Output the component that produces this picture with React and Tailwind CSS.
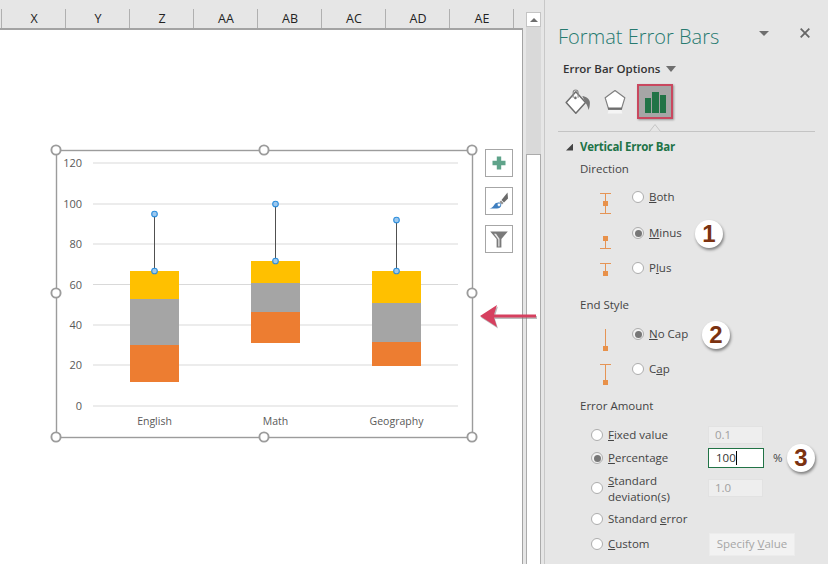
const columns = ['X', 'Y', 'Z', 'AA', 'AB', 'AC', 'AD', 'AE']

const gridLines = [
  { y: 163, label: '120' },
  { y: 204, label: '100' },
  { y: 244, label: '80' },
  { y: 284.5, label: '60' },
  { y: 325, label: '40' },
  { y: 365, label: '20' },
  { y: 406, label: '0' },
]

const bars = [
  { name: 'English', x: 130, top: 271, a: 299, b: 345, c: 382, err: 214 },
  { name: 'Math', x: 251, top: 261, a: 283, b: 312, c: 343, err: 204 },
  { name: 'Geography', x: 372, top: 271, a: 303, b: 342, c: 366, err: 220 },
]

const handles = [
  [56, 150], [264, 150], [472, 150],
  [56, 293], [472, 293],
  [56, 437], [264, 437], [472, 437],
]

function Chart() {
  return (
    <svg viewBox="50 144 430 300" className="block w-[430px] h-[300px] ml-[50px] mt-[114px]">
      <rect x="56.5" y="150.5" width="416" height="287" fill="#fff" stroke="#9c9c9c" strokeWidth="1.4" />
      {gridLines.map((g) => (
        <g key={g.label}>
          <line x1="93" x2="458" y1={g.y} y2={g.y} stroke="#d9d9d9" strokeWidth="1" />
          <text x="82" y={g.y + 4} textAnchor="end" fontSize="11" fill="#595959" fontFamily="'Open Sans', sans-serif">{g.label}</text>
        </g>
      ))}
      {bars.map((b) => {
        const cx = b.x + 24.5
        return (
          <g key={b.name}>
            <rect x={b.x} y={b.top} width="49" height={b.a - b.top} fill="#ffc000" />
            <rect x={b.x} y={b.a} width="49" height={b.b - b.a} fill="#a5a5a5" />
            <rect x={b.x} y={b.b} width="49" height={b.c - b.b} fill="#ed7d31" />
            <line x1={cx} x2={cx} y1={b.err} y2={b.top} stroke="#505050" strokeWidth="1" />
            <circle cx={cx} cy={b.err} r="2.8" fill="#9dc8ee" stroke="#2e8fdc" strokeWidth="1.1" />
            <circle cx={cx} cy={b.top} r="2.8" fill="#9dc8ee" stroke="#2e8fdc" strokeWidth="1.1" />
            <text x={cx} y="425" textAnchor="middle" fontSize="10.5" fill="#595959" fontFamily="'Open Sans', sans-serif">{b.name}</text>
          </g>
        )
      })}
      {handles.map(([x, y]) => (
        <circle key={x + '-' + y} cx={x} cy={y} r="4.6" fill="#fff" stroke="#9c9c9c" strokeWidth="1.9" />
      ))}
    </svg>
  )
}

function ChartButton({ children }) {
  return (
    <div className="w-[28px] h-[28px] border border-[#a6a6a6] bg-white flex items-center justify-center">
      {children}
    </div>
  )
}

function ChartButtons() {
  return (
    <div className="absolute left-[485px] top-[119px] flex flex-col gap-[10px]">
      <ChartButton>
        <svg width="16" height="16" viewBox="0 0 16 16">
          <path d="M5.8 1.5h4.4v4.3h4.3v4.4h-4.3v4.3H5.8v-4.3H1.5V5.8h4.3z" fill="#5fa38a" />
        </svg>
      </ChartButton>
      <ChartButton>
        <svg width="22" height="22" viewBox="0 0 22 22">
          <path d="M19.5 2.5l.5 6-4 4-2.5-2.5z" fill="#6a6a6a" />
          <path d="M13 10.5l2.5 2.5-1.5 1.5-2.5-2.5z" fill="#8e8e8e" />
          <path d="M10.5 12.5c2 0 3 1.5 2.7 3-.4 2-2 2.8-4.2 3.1H1.5c2.5-.8 4-2.5 5-4.2.8-1.2 2.4-1.9 4-1.9z" fill="#3f7fc0" />
          <circle cx="11" cy="14.8" r="1.7" fill="#fff" stroke="#3f7fc0" strokeWidth="0.6" />
        </svg>
      </ChartButton>
      <ChartButton>
        <svg width="20" height="20" viewBox="0 0 20 20">
          <path d="M1.2 2.5h17.6l-6.4 7.5v8.5H7.6V10z" fill="#7a7a7a" />
          <path d="M5 4.8l4.3 5.6v7h1.2v-7.6L7 4.8z" fill="#e8e8e8" />
        </svg>
      </ChartButton>
    </div>
  )
}

function PointerArrow() {
  return (
    <svg viewBox="0 0 62 26" className="absolute left-[478px] top-[303px] w-[62px] h-[26px] overflow-visible">
      <path d="M2 13L19 2l-3 9.5h42v3H16l3 9.5z" fill="#7a7a7a" opacity="0.5" transform="translate(1 1.5)" />
      <path d="M2 13L19 2l-3 9.5h42v3H16l3 9.5z" fill="#d6405f" />
    </svg>
  )
}

function SheetArea() {
  return (
    <div className="w-[523px] shrink-0 flex flex-col relative">
      <div className="h-[30px] flex items-end border-b-2 border-[#a3a3a3] bg-[#e6e6e6] pl-[1px]">
        {columns.map((c) => (
          <div key={c} className="w-[64px] h-[19px] shrink-0 border-l border-[#b0b0b0] flex items-center justify-center text-[12.5px] leading-none text-[#222] pl-[1px] pt-[2px]">
            {c}
          </div>
        ))}
        <div className="h-[19px] border-l border-[#b0b0b0]" />
      </div>
      <div className="flex-1 bg-white border-r border-[#a3a3a3] relative">
        <Chart />
        <ChartButtons />
      </div>
    </div>
  )
}

function Scrollbar() {
  return (
    <div className="w-[21px] shrink-0 bg-[#e6e6e6] pt-[12px] pl-[3px] flex flex-col">
      <div className="w-[15px] h-[15px] bg-white border border-[#c4c4c4] flex items-center justify-center">
        <div className="w-0 h-0 border-l-[4px] border-r-[4px] border-b-[4px] border-l-transparent border-r-transparent border-b-[#6e6e6e]" />
      </div>
      <div className="w-[15px] h-[127px] bg-[#d9d9d9]" />
      <div className="w-[15px] flex-1 bg-white border border-[#ababab] border-b-0" />
    </div>
  )
}

function BucketIcon() {
  return (
    <svg width="28" height="28" viewBox="0 0 26 26">
      <path d="M11 3.5l-9 10 9 10 9-10z" fill="#fff" stroke="#6e6e6e" strokeWidth="1.4" strokeLinejoin="round" />
      <path d="M8.5 9V4.2a2.3 2.3 0 0 1 4.6 0V9" fill="none" stroke="#8a8a8a" strokeWidth="1" />
      <circle cx="10.6" cy="9.2" r="1.2" fill="#6e6e6e" />
      <path d="M17 7.5c3.5.5 6.5 2.5 7 5.5.2 2.5-.3 5.5-1.2 7.5-.6-2.5-1.4-5-3-7z" fill="#777" />
    </svg>
  )
}

function ShapeIcon() {
  return (
    <svg width="24" height="26" viewBox="0 0 24 26">
      <path d="M12 1.5l9.8 7.3-3.4 11.4H5.6L2.2 8.8z" fill="#fff" stroke="#808080" strokeWidth="1.2" strokeLinejoin="round" />
      <rect x="5" y="18.5" width="14" height="2.2" fill="#6e6e6e" />
      <path d="M5.5 21h13l.8 3.5H4.7z" fill="#f5f5f5" />
    </svg>
  )
}

// coordinates are relative to the 20px row, the drawing may hang out of it
function OrangeMark({ capTop, capBottom, top, square }) {
  return (
    <svg viewBox="0 0 22 20" className="w-[22px] h-[20px] shrink-0 overflow-visible">
      <line x1="11.5" x2="11.5" y1={top} y2={capBottom ?? square} stroke="#e59455" strokeWidth="1" />
      {capTop !== undefined && <line x1="6" x2="17" y1={capTop} y2={capTop} stroke="#e59455" strokeWidth="1" />}
      {capBottom !== undefined && <line x1="6" x2="17" y1={capBottom} y2={capBottom} stroke="#e59455" strokeWidth="1" />}
      <rect x="9" y={square} width="5" height="5" fill="#e8914a" />
    </svg>
  )
}

function Radio({ checked }) {
  return (
    <span className={`w-[12px] h-[12px] shrink-0 rounded-full border border-[#adadad] flex items-center justify-center ${checked ? 'bg-[#f2f2f2]' : 'bg-white'}`}>
      {checked && <span className="w-[7px] h-[7px] rounded-full bg-[#777]" />}
    </span>
  )
}

function Badge({ children, className }) {
  return (
    <span className={`absolute w-[28px] h-[28px] rounded-full bg-white shadow-[1px_2px_3px_rgba(0,0,0,0.45)] flex items-center justify-center text-[24px] font-bold leading-none text-[#7b3210] font-['Liberation_Sans',sans-serif] ${className}`}>
      {children}
    </span>
  )
}

function OptionRow({ mark, checked, children, badge }) {
  return (
    <div className="relative h-[20px] flex items-center pl-[49px]">
      {mark}
      <span className="ml-[16px]"><Radio checked={checked} /></span>
      <span className="ml-[5px]">{children}</span>
      {badge}
    </div>
  )
}

function AmountRow({ checked, children, className = 'h-[20px]', input }) {
  return (
    <div className={`flex items-center pl-[46px] ${className}`}>
      <Radio checked={checked} />
      <span className="ml-[5px] w-[100px] shrink-0 leading-[16px]">{children}</span>
      {input}
    </div>
  )
}

function DisabledInput({ value }) {
  return (
    <div className="w-[55px] h-[18px] bg-[#eeeeee] border border-[#e2e2e2] pl-[6px] flex items-center text-[#a0a0a0]">
      {value}
    </div>
  )
}

function FormatPanel() {
  return (
    <div className="flex-1 border-l border-[#c8c8c8] bg-[#e6e6e6] relative text-[11.5px] leading-[20px] text-[#444] font-['Open_Sans',sans-serif]">
      {/* title */}
      <div className="h-[50px] pt-[24px] pl-[13px] flex items-center justify-between pr-[18px]">
        <span className="text-[20px] leading-[28px] font-light text-[#277a70]">Format Error Bars</span>
        <div className="flex items-center gap-[31px] mb-[8px]">
          <div className="w-0 h-0 border-l-[5px] border-r-[5px] border-t-[5px] border-l-transparent border-r-transparent border-t-[#6e6e6e]" />
          <svg width="10" height="10" viewBox="0 0 10 10">
            <path d="M.7.7l8.6 8.6M9.3.7L.7 9.3" stroke="#666" strokeWidth="1.8" />
          </svg>
        </div>
      </div>

      {/* options dropdown */}
      <div className="mt-[9px] h-[20px] pl-[18px] flex items-center gap-[6px]">
        <span className="font-semibold text-[#333]">Error Bar Options</span>
        <div className="w-0 h-0 border-l-[5px] border-r-[5px] border-t-[6px] border-l-transparent border-r-transparent border-t-[#6e6e6e]" />
      </div>

      {/* tabs */}
      <div className="mt-[5px] h-[36px] pl-[19px] flex items-center">
        <BucketIcon />
        <span className="ml-[11px]"><ShapeIcon /></span>
        <div className="ml-[10px] self-start w-[36px] h-[35px] border-2 border-[#c9485f] bg-[#a6a6a6] shadow-[1px_1px_2px_rgba(0,0,0,0.35)] flex items-end justify-center gap-[1px] pb-[4px]">
          <div className="w-[6px] h-[15px] bg-[#217346]" />
          <div className="w-[7px] h-[21px] bg-[#217346]" />
          <div className="w-[6px] h-[18px] bg-[#217346]" />
        </div>
      </div>

      {/* divider with the little notch under the active tab */}
      <div className="relative mt-[11px] ml-[13px] mr-[13px] h-[1px] bg-[#c4c4c4]">
        <svg width="14" height="9" viewBox="0 0 14 9" className="absolute left-[90px] top-[-8px]">
          <path d="M0 8.5h1.5L7 1.5l5.5 7H14" fill="#e6e6e6" stroke="#c4c4c4" strokeWidth="1" />
        </svg>
      </div>

      {/* vertical error bar */}
      <div className="mt-[5px] h-[20px] flex items-center pl-[21px]">
        <div className="w-[7px] h-[7px] bg-[#444] [clip-path:polygon(100%_0,100%_100%,0_100%)]" />
        <span className="ml-[7px] font-bold text-[#217346] tracking-[-0.25px]">Vertical Error Bar</span>
      </div>

      <div className="mt-[2px] pl-[35px]">Direction</div>
      <div className="mt-[8px]">
        <OptionRow mark={<OrangeMark capTop={6.5} capBottom={26.5} top={6.5} square={14} />}>
          <span><u>B</u>oth</span>
        </OptionRow>
      </div>
      <div className="mt-[16px]">
        <OptionRow checked mark={<OrangeMark capBottom={25.5} top={15} square={13} />} badge={<Badge className="left-[150px] top-[-3px]">1</Badge>}>
          <span><u>M</u>inus</span>
        </OptionRow>
      </div>
      <div className="mt-[15px]">
        <OptionRow mark={<OrangeMark capTop={5.5} top={5.5} square={13} />}>
          <span>P<u>l</u>us</span>
        </OptionRow>
      </div>

      <div className="mt-[17px] pl-[35px]">End Style</div>
      <div className="mt-[9px]">
        <OptionRow checked mark={<OrangeMark top={5} square={22} />} badge={<Badge className="left-[157px] top-[-3px]">2</Badge>}>
          <span><u>N</u>o Cap</span>
        </OptionRow>
      </div>
      <div className="mt-[15px]">
        <OptionRow mark={<OrangeMark capTop={5.5} top={5.5} square={21} />}>
          <span>C<u>a</u>p</span>
        </OptionRow>
      </div>

      <div className="mt-[17px] pl-[35px]">Error Amount</div>
      <div className="mt-[9px]">
        <AmountRow input={<DisabledInput value="0.1" />}><u>F</u>ixed value</AmountRow>
      </div>
      <div className="mt-[3px] relative">
        <AmountRow
          checked
          input={
            <div className="flex items-center">
              <div className="w-[56px] h-[20px] bg-white border border-[#217346] pl-[7px] flex items-center text-[#333]">
                100<span className="w-[1px] h-[14px] bg-black" />
              </div>
              <span className="ml-[9px]">%</span>
            </div>
          }
        >
          <u>P</u>ercentage
        </AmountRow>
        <Badge className="left-[242px] top-[-4px]">3</Badge>
      </div>
      <div className="mt-[5px]">
        <AmountRow className="h-[30px]" input={<DisabledInput value="1.0" />}>
          <span className="block pt-[2px]"><u>S</u>tandard deviation(s)</span>
        </AmountRow>
      </div>
      <div className="mt-[6px]">
        <AmountRow>Standard <u>e</u>rror</AmountRow>
      </div>
      <div className="mt-[5px]">
        <AmountRow
          input={
            <div className="ml-[1px] w-[86px] h-[23px] bg-[#f2f2f2] border border-[#ececec] flex items-center justify-center text-[#a6a6a6]">
              <span>Specify <u>V</u>alue</span>
            </div>
          }
        >
          <u>C</u>ustom
        </AmountRow>
      </div>
    </div>
  )
}

export default function App() {
  return (
    <div className="relative w-[828px] h-[564px] overflow-hidden flex bg-[#e6e6e6] font-['Open_Sans',sans-serif]">
      <SheetArea />
      <Scrollbar />
      <FormatPanel />
      <PointerArrow />
    </div>
  )
}
